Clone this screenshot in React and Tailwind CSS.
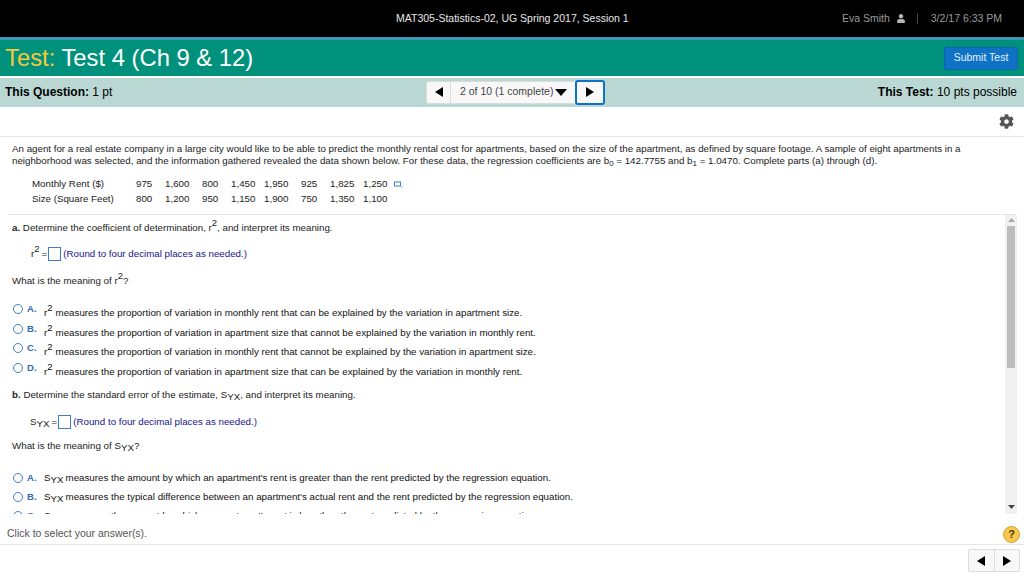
import React from "react";
import { FaCog, FaUser } from "react-icons/fa";

const Tri = ({ dir = "left", w = 8, h = 10 }) => (
  <svg width={w} height={h} viewBox="0 0 8 10" className="block" preserveAspectRatio="none">
    {dir === "left" && <path d="M8 0V10L0 5Z" fill="#000" />}
    {dir === "right" && <path d="M0 0V10L8 5Z" fill="#000" />}
  </svg>
);
const R2 = () => (
  <span>r<sup className="text-[9.5px] leading-none align-baseline relative top-[-5px]">2</sup></span>
);
const Syx = () => (
  <span>S<sub className="text-[9.75px] leading-none align-baseline relative top-[2px]">YX</sub></span>
);
const Choice = ({ letter, h, mt, children, sym, radioCls = "-mt-[2px]", letterCls = "-mt-[3px]", gap = "ml-[3px]" }) => (
  <div className={`flex items-start text-[#111] ${h} ${mt}`}>
    <span className={`w-[10px] h-[10px] ml-[1px] rounded-full border-[1.5px] border-[#3f7fc4] bg-white shrink-0 ${radioCls}`} />
    <span className={`w-[17px] ml-[4px] font-bold text-[#2d6cb5] text-[9.5px] leading-[11px] ${letterCls}`}>{letter}.</span>
    <span className="leading-[15px] -mt-[1px] whitespace-nowrap">{sym}<span className={gap}>{children}</span></span>
  </div>
);
const SyxChoice = (props) => <Choice {...props} sym={<Syx />} radioCls="mt-[2px]" letterCls="mt-[1px]" gap="ml-[2px]" />;
const colWidths = ["w-[29px]", "w-[37px]", "w-[29px]", "w-[33px]", "w-[37px]", "w-[29px]", "w-[33px]", "w-[31px]"];
const Cells = ({ vals }) => (
  <>
    {vals.map((v, i) => (
      <span key={i} className={colWidths[i]}>{v}</span>
    ))}
  </>
);
const Box = () => <span className="inline-block w-[13px] h-[14px] border border-[#3f7fc4] bg-white align-middle" />;

export default function App() {
  return (
    <div className="w-[1024px] h-[576px] overflow-hidden bg-white text-black flex flex-col" style={{ fontFamily: '"Liberation Sans", Arial, sans-serif' }}>
      <header className="h-[37px] bg-black shrink-0 flex items-center text-[10.5px]">
        <div className="w-[1024px] flex items-center">
          <span className="ml-[396px] text-[#e8e8e8]">MAT305-Statistics-02, UG Spring 2017, Session 1</span>
          <span className="ml-auto text-[#9b9b9b] flex items-center mr-[22px]">
            Eva Smith
            <FaUser className="ml-[7px] w-[8px] h-[9px] text-[#b5b5b5]" />
            <span className="ml-[12px] mr-[13px] w-px h-[11px] bg-[#444]" />
            3/2/17 6:33 PM
          </span>
        </div>
      </header>
      <div className="h-[3px] bg-[#3c98b4] shrink-0" />
      <div className="h-[36px] bg-[#00917c] shrink-0 flex items-center pl-[5px] pr-[6px]">
        <h1 className="text-[23.8px] leading-none text-white font-normal"><span className="text-[#f6c83c]">Test:</span> Test 4 (Ch 9 &amp; 12)</h1>
        <button className="ml-auto h-[23px] w-[74px] rounded-[2px] bg-[#0f72c4] border border-[#0b65ad] text-[#e4f1fb] text-[10.5px]">Submit Test</button>
      </div>
      <div className="h-[1.5px] bg-white shrink-0" />
      <div className="h-[29.5px] bg-[#bad8d3] shrink-0 flex items-center pl-[5px] pr-[7px] text-[12px] relative">
        <span><b>This Question:</b> 1 pt</span>
        <div className="absolute left-[426px] top-[3px] flex h-[23px] items-stretch">
          <button className="w-[25px] bg-[#f8f8f8] border border-[#dcdcdc] rounded-l-[2px] flex items-center justify-center"><Tri dir="left" /></button>
          <div className="w-[124px] bg-[#f8f8f8] border-y border-[#dcdcdc] flex items-center pl-[9px] text-[10.5px] text-[#444]">
            2 of 10 (1 complete)
            <svg width="12" height="7" viewBox="0 0 12 7" className="ml-[2px] mt-[1px]"><path d="M0 0H12L6 7Z" fill="#000" /></svg>
          </div>
          <button className="w-[30px] -my-[1px] bg-[#f8f8f8] border-2 border-[#0f72c4] rounded-[3px] flex items-center justify-center"><Tri dir="right" /></button>
        </div>
        <span className="ml-auto"><b>This Test:</b> 10 pts possible</span>
      </div>
      <div className="h-[29px] shrink-0 flex items-center justify-end pr-[10px]">
        <FaCog className="w-[15px] h-[15px] text-[#555]" />
      </div>
      <div className="border-t border-[#e3e6ec] shrink-0" />
      <main className="text-[9.75px] text-[#222] shrink-0">
        <div className="pl-[12px] pt-[6px] leading-[12px] whitespace-nowrap">
          <p>An agent for a real estate company in a large city would like to be able to predict the monthly rental cost for apartments, based on the size of the apartment, as defined by square footage. A sample of eight apartments in a</p>
          <p>neighborhood was selected, and the information gathered revealed the data shown below. For these data, the regression coefficients are b<sub className="text-[8px] leading-none align-baseline relative top-[2px]">0</sub> = 142.7755 and b<sub className="text-[8px] leading-none align-baseline relative top-[2px]">1</sub> = 1.0470. Complete parts (a) through (d).</p>
        </div>
        <div className="pl-[32px] pt-[10px]">
          <div className="flex h-[15px] items-center">
            <span className="w-[104px]">Monthly Rent ($)</span>
            <Cells vals={["975", "1,600", "800", "1,450", "1,950", "925", "1,825", "1,250"]} />
            <svg width="9" height="8" viewBox="0 0 9 8"><rect x="0.5" y="1" width="6" height="4" fill="none" stroke="#3f7fc4" /><path d="M8 5v2" stroke="#9bb" /></svg>
          </div>
          <div className="flex h-[15px] items-center">
            <span className="w-[104px]">Size (Square Feet)</span>
            <Cells vals={["800", "1,200", "950", "1,150", "1,900", "750", "1,350", "1,100"]} />
          </div>
        </div>
        <div className="ml-[8px] mr-[8px] mt-[7px] border-t border-[#e3e6ec]" />
        <div className="flex h-[299px]">
          <div className="w-[997px] overflow-hidden pl-[12px] whitespace-nowrap">
            <div className="mt-[7px] h-[12px] leading-[12px]"><b>a.</b> Determine the coefficient of determination, <R2 />, and interpret its meaning.</div>
            <div className="mt-[12px] ml-[19px] h-[16px] leading-[16px] flex items-center"><R2 /><span className="ml-[2px] mr-[1px]">=</span><Box /><span className="ml-[2px] text-[#16168c]">(Round to four decimal places as needed.)</span></div>
            <div className="mt-[13px] h-[12px] leading-[12px]">What is the meaning of <R2 />?</div>
            <Choice letter="A" sym={<R2 />} mt="mt-[19px]" h="h-[19.5px]">measures the proportion of variation in monthly rent that can be explained by the variation in apartment size.</Choice>
            <Choice letter="B" sym={<R2 />} mt="" h="h-[19.5px]">measures the proportion of variation in apartment size that cannot be explained by the variation in monthly rent.</Choice>
            <Choice letter="C" sym={<R2 />} mt="" h="h-[19.5px]">measures the proportion of variation in monthly rent that cannot be explained by the variation in apartment size.</Choice>
            <Choice letter="D" sym={<R2 />} mt="" h="h-[19.5px]">measures the proportion of variation in apartment size that can be explained by the variation in monthly rent.</Choice>
            <div className="mt-[5px] h-[12px] leading-[12px]"><b>b.</b> Determine the standard error of the estimate, <Syx />, and interpret its meaning.</div>
            <div className="mt-[13px] ml-[18px] h-[16px] leading-[16px] flex items-center"><Syx /><span className="ml-[2px] mr-[1px]">=</span><Box /><span className="ml-[2px] text-[#16168c]">(Round to four decimal places as needed.)</span></div>
            <div className="mt-[10px] h-[12px] leading-[12px]">What is the meaning of <Syx />?</div>
            <SyxChoice letter="A" mt="mt-[19px]" h="h-[19px]">measures the amount by which an apartment's rent is greater than the rent predicted by the regression equation.</SyxChoice>
            <SyxChoice letter="B" mt="" h="h-[19px]">measures the typical difference between an apartment's actual rent and the rent predicted by the regression equation.</SyxChoice>
            <SyxChoice letter="C" mt="" h="h-[19px]">measures the amount by which an apartment's rent is less than the rent predicted by the regression equation.</SyxChoice>
          </div>
          <div className="w-[12px] ml-[8px] mr-[7px] bg-[#f0f0f0] flex flex-col items-center">
            <svg width="7" height="4" viewBox="0 0 7 4" className="mt-[3px]"><path d="M0 4H7L3.5 0Z" fill="#aaa" /></svg>
            <div className="mt-[4px] w-[8px] h-[142px] bg-[#bcbcbc]" />
            <svg width="7" height="4" viewBox="0 0 7 4" className="mt-auto mb-[5px]"><path d="M0 0H7L3.5 4Z" fill="#444" /></svg>
          </div>
        </div>
      </main>
      <div className="h-[31px] shrink-0 flex items-center pt-[10px] px-[7px] text-[#555] text-[10.5px] border-b border-[#e3e6ec]">
        Click to select your answer(s).
        <span className="ml-auto mr-[-3px] w-[17px] h-[17px] rounded-full bg-[#f6c850] border border-[#d6a22e] text-[#4a3a10] font-bold text-[11px] flex items-center justify-center">?</span>
      </div>
      <div className="flex justify-end pr-[4px] pt-[4px]">
        <div className="flex h-[23px] w-[52px] bg-[#f8f8f8] border border-[#dcdcdc] rounded-[2px]">
          <button className="flex-1 flex items-center justify-center border-r border-[#dcdcdc]"><Tri dir="left" /></button>
          <button className="flex-1 flex items-center justify-center"><Tri dir="right" /></button>
        </div>
      </div>
    </div>
  );
}
